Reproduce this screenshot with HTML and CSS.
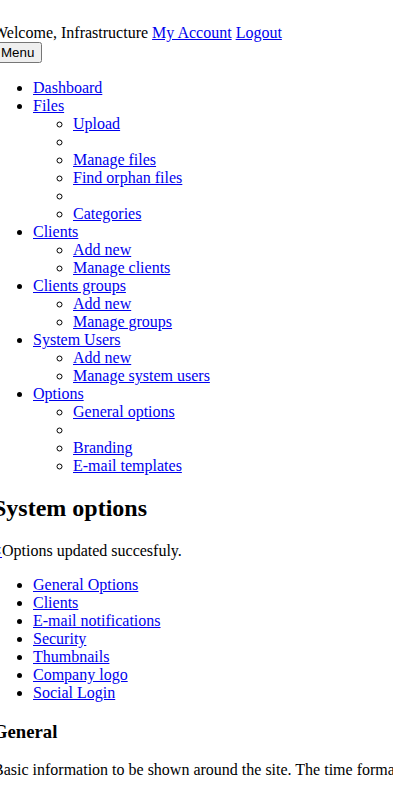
FILE: index.html
```html
<!DOCTYPE html>
<html lang="en">
<head>
  <meta charset="UTF-8">
  <meta name="viewport" content="width=device-width, initial-scale=1.0">
  <title>System options</title>
  <link rel="stylesheet" href="styles.css">
</head>
<body>
  <div class="page">
    <div class="account">
      Welcome, Infrastructure <a href="#">My Account</a> <a href="#">Logout</a>
    </div>
    <button class="menu-toggle" type="button">Menu</button>

    <ul class="main-nav">
      <li><a href="#">Dashboard</a></li>
      <li><a href="#">Files</a>
        <ul>
          <li><a href="#">Upload</a></li>
          <li></li>
          <li><a href="#">Manage files</a></li>
          <li><a href="#">Find orphan files</a></li>
          <li></li>
          <li><a href="#">Categories</a></li>
        </ul>
      </li>
      <li><a href="#">Clients</a>
        <ul>
          <li><a href="#">Add new</a></li>
          <li><a href="#">Manage clients</a></li>
        </ul>
      </li>
      <li><a href="#">Clients groups</a>
        <ul>
          <li><a href="#">Add new</a></li>
          <li><a href="#">Manage groups</a></li>
        </ul>
      </li>
      <li><a href="#">System Users</a>
        <ul>
          <li><a href="#">Add new</a></li>
          <li><a href="#">Manage system users</a></li>
        </ul>
      </li>
      <li><a href="#">Options</a>
        <ul>
          <li><a href="#">General options</a></li>
          <li></li>
          <li><a href="#">Branding</a></li>
          <li><a href="#">E-mail templates</a></li>
        </ul>
      </li>
    </ul>

    <h2>System options</h2>

    <p class="alert"><a href="#" class="close">×</a>Options updated succesfuly.</p>

    <ul class="tabs">
      <li><a href="#">General Options</a></li>
      <li><a href="#">Clients</a></li>
      <li><a href="#">E-mail notifications</a></li>
      <li><a href="#">Security</a></li>
      <li><a href="#">Thumbnails</a></li>
      <li><a href="#">Company logo</a></li>
      <li><a href="#">Social Login</a></li>
    </ul>

    <h3>General</h3>
    <p class="info">Basic information to be shown around the site. The time format and zone values affect how the clients see the dates on their files lists.</p>
  </div>
</body>
</html>
```

FILE: styles.css
```css
body {
  margin: 0;
  font-family: "Liberation Serif", "Times New Roman", serif;
  font-size: 16px;
  color: #000;
  overflow: hidden;
}
.page {
  margin-left: -7px;
  padding-top: 24px;
  width: 420px;
}
a {
  color: #0000ee;
}
.menu-toggle {
  font-family: "Liberation Sans", Arial, sans-serif;
  font-size: 13.33px;
  display: block;
}
.main-nav {
  margin: 16px 0;
  padding-left: 40px;
}
.main-nav ul {
  margin: 0;
  padding-left: 40px;
  list-style: circle;
}
.close {
  display: inline-block;
  width: 9px;
}
.info {
  white-space: nowrap;
}
```
